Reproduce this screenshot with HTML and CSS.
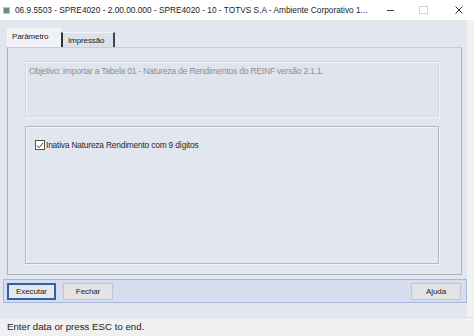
FILE: index.html
```html
<!DOCTYPE html>
<html lang="pt">
<head>
    <meta charset="UTF-8">
    <title>SPRE4020</title>
    <link rel="stylesheet" href="styles.css">
</head>
<body>
    <div class="titlebar">
        <span class="app-icon"></span>
        <span class="title">06.9.5503 - SPRE4020 - 2.00.00.000 - SPRE4020 - 10 - TOTVS S.A - Ambiente Corporativo 1...</span>
        <span class="ctl ctl-min"></span>
        <span class="ctl ctl-max"></span>
        <span class="ctl ctl-close">
            <svg width="8" height="8" viewBox="0 0 8 8"><path d="M0.5 0.5L7.5 7.5M7.5 0.5L0.5 7.5" stroke="#333" stroke-width="1"/></svg>
        </span>
    </div>

    <div class="client">
        <div class="tabs">
            <div class="tab active">Parâmetro</div>
            <div class="tab">Impressão</div>
        </div>
        <div class="tab-panel">
            <div class="group group-info">
                <p class="objective">Objetivo: Importar a Tabela 01 - Natureza de Rendimentos do REINF versão 2.1.1.</p>
            </div>
            <div class="group group-options">
                <label class="check">
                    <span class="box">
                        <svg width="9" height="9" viewBox="0 0 9 9"><path d="M1.2 4.6L3.5 7L7.9 1.6" fill="none" stroke="#3a3a3a" stroke-width="1.1"/></svg>
                    </span>
                    Inativa Natureza Rendimento com 9 dígitos
                </label>
            </div>
        </div>
        <div class="button-bar">
            <button class="btn btn-focus">Executar</button>
            <button class="btn">Fechar</button>
            <span class="spacer"></span>
            <button class="btn">Ajuda</button>
        </div>
    </div>

    <div class="statusbar">Enter data or press ESC to end.</div>
</body>
</html>
```

FILE: styles.css
```css
body {
    margin: 0;
    width: 474px;
    height: 336px;
    overflow: hidden;
    background-color: #f2f2f3;
    font-family: "Liberation Sans", Arial, sans-serif;
    color: #222;
}

.titlebar {
    height: 20px;
    background-color: #fff;
    display: flex;
    align-items: center;
    font-size: 8.3px;
}

.app-icon {
    width: 5px;
    height: 5px;
    margin-left: 3px;
    margin-right: 5px;
    background-color: #6d8a80;
    border: 1px solid #b9c4c0;
}

.title {
    color: #1c1c1c;
    white-space: nowrap;
    overflow: hidden;
    width: 372px;
    flex-shrink: 0;
}

.ctl {
    display: flex;
    align-items: center;
    justify-content: center;
    flex-shrink: 0;
}

.ctl-min {
    width: 7px;
    height: 1px;
    background-color: #444;
}

.ctl-max {
    width: 7px;
    height: 6px;
    border: 1px solid #d4d4d4;
    margin-left: 25px;
}

.ctl-close {
    margin-left: 27px;
}

.client {
    width: 467px;
    height: 297px;
    background-color: #e2e6ee;
    display: flex;
    flex-direction: column;
}

.tabs {
    display: flex;
    align-items: flex-end;
    height: 27px;
    padding-left: 7px;
    font-size: 8px;
    letter-spacing: -0.1px;
}

.tab {
    box-sizing: border-box;
    height: 15px;
    width: 54px;
    padding-left: 5px;
    padding-top: 3px;
    background-color: #dde1ea;
    border-left: 2px solid #333;
    border-right: 2px solid #444;
    border-top: 1px solid #f4f5f8;
    color: #222;
}

.tab.active {
    height: 19px;
    padding-top: 3px;
    width: 54px;
    background-color: #f1f2f6;
    border-left: 1px solid #f4f5f8;
    border-right: none;
    padding-left: 4px;
}

.tab-panel {
    box-sizing: border-box;
    margin-left: 7px;
    width: 455px;
    height: 228px;
    border: 1px solid #aab0bb;
    border-top-color: #c9cdd6;
    padding: 13px 0 0 17px;
    display: flex;
    flex-direction: column;
    gap: 9px;
}

.group {
    box-sizing: border-box;
    width: 414px;
    border: 1px solid #b3b8c2;
    box-shadow: inset 1px 1px 0 #f3f4f7, 1px 1px 0 #f3f4f7;
}

.group-info {
    height: 56px;
    border-color: #d3d6dd;
    background-color: #e0e4ec;
}

.objective {
    margin: 4px 0 0 3px;
    font-size: 8.7px;
    letter-spacing: -0.3px;
    color: #8c919a;
}

.group-options {
    height: 138px;
}

.check {
    display: flex;
    align-items: center;
    margin: 13px 0 0 9px;
    font-size: 8.4px;
    letter-spacing: -0.2px;
    color: #2a2a2a;
}

.box {
    box-sizing: border-box;
    width: 10px;
    height: 10px;
    border: 1px solid #555;
    background-color: #fff;
    margin-right: 1px;
    display: flex;
    align-items: center;
    justify-content: center;
}

.button-bar {
    box-sizing: border-box;
    margin: 4px 0 0 3px;
    width: 464px;
    height: 24px;
    background-color: #d5ddef;
    border: 1px solid #a8b7d6;
    display: flex;
    align-items: center;
    padding: 0 5px 0 3px;
    gap: 7px;
}

.spacer {
    flex: 1;
}

.btn {
    box-sizing: border-box;
    width: 50px;
    height: 17px;
    padding: 0;
    font-family: "Liberation Sans", Arial, sans-serif;
    font-size: 8px;
    letter-spacing: -0.1px;
    color: #222;
    background-color: #e4e4e6;
    border: 1px solid #c3c6cc;
}

.btn-focus {
    width: 49px;
    border: 2px solid #2d62a6;
    background-color: #e6e8ee;
}

.statusbar {
    box-sizing: border-box;
    height: 19px;
    border-top: 1px solid #dcdcdc;
    background-color: #f0f0f0;
    padding: 3px 0 0 7px;
    font-size: 9.7px;
    color: #222;
}
```
